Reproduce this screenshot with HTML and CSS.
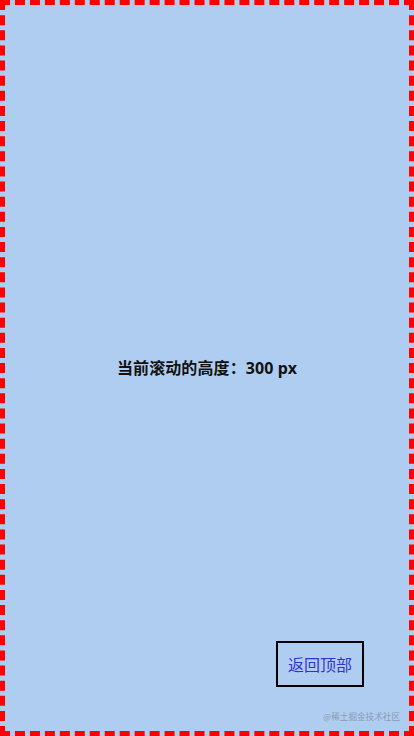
FILE: index.html
```html
<!DOCTYPE html>
<html lang="zh">
<head>
<meta charset="utf-8">
<link rel="stylesheet" href="styles.css">
</head>
<body>
<div class="page">
  <div class="height-text">当前滚动的高度：300 px</div>
  <button class="back-top">返回顶部</button>
  <div class="watermark">@稀土掘金技术社区</div>
</div>
</body>
</html>
```
FILE: styles.css
```css
html, body {
  margin: 0;
  padding: 0;
}
body {
  font-family: "Noto Sans", "Noto Sans CJK SC", sans-serif;
}
.page {
  position: relative;
  box-sizing: border-box;
  width: 414px;
  height: 736px;
  border: 5px dashed #ff0000;
  background: #afcdf0;
  display: flex;
  align-items: center;
  justify-content: center;
}
.height-text {
  font-size: 16px;
  font-weight: bold;
  color: #111;
  margin-top: -2px;
  letter-spacing: 0.1px;
}
.back-top {
  position: absolute;
  left: 271px;
  top: 636px;
  width: 88px;
  height: 46px;
  box-sizing: border-box;
  border: 2px solid #000;
  background: transparent;
  color: #3333cc;
  font-family: "Noto Sans CJK SC", sans-serif;
  font-size: 16px;
  padding: 0;
}
.watermark {
  position: absolute;
  right: 9px;
  bottom: 10px;
  font-size: 8.6px;
  line-height: 1;
  color: #8a9bb5;
  font-family: "Noto Sans CJK SC", sans-serif;
}
```
